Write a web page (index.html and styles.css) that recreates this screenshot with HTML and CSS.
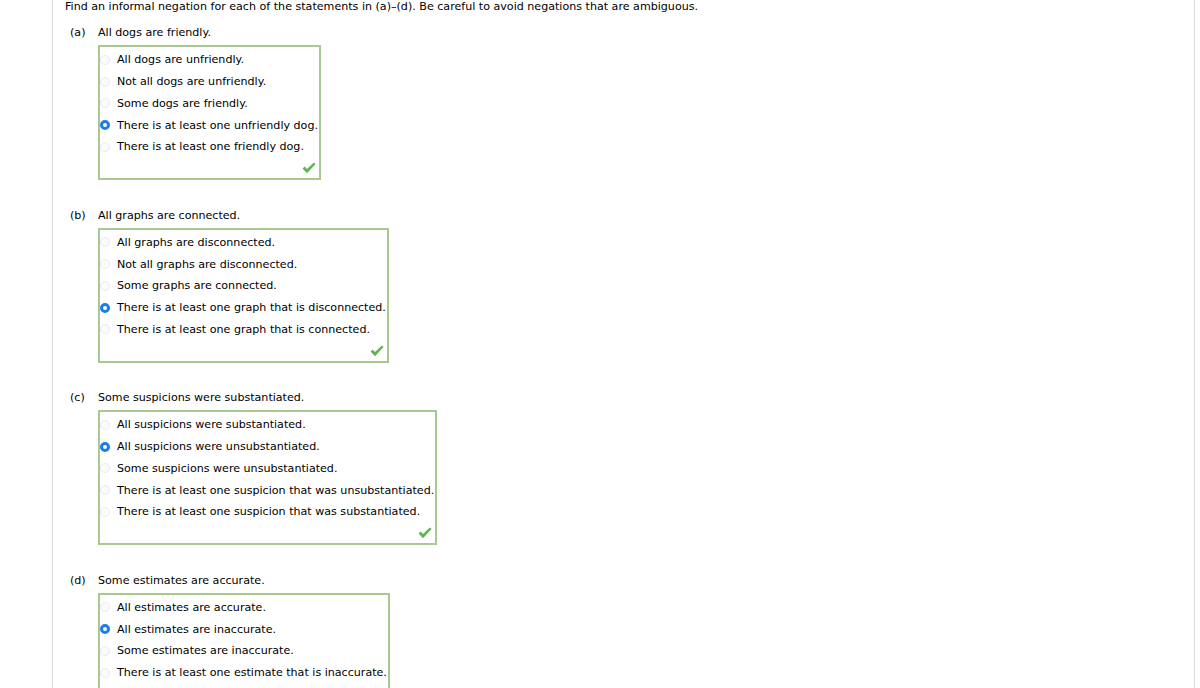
FILE: index.html
```html
<!DOCTYPE html>
<html>
<head>
<meta charset="utf-8">
<link rel="stylesheet" href="styles.css">
</head>
<body>
<div class="page">
  <p class="intro">Find an informal negation for each of the statements in (a)–(d). Be careful to avoid negations that are ambiguous.</p>

  <div class="part">
    <div class="label"><span class="tag">(a)</span>All dogs are friendly.</div>
    <div class="box">
      <div class="opt"><span class="radio"></span>All dogs are unfriendly.</div>
      <div class="opt"><span class="radio"></span>Not all dogs are unfriendly.</div>
      <div class="opt"><span class="radio"></span>Some dogs are friendly.</div>
      <div class="opt"><span class="radio on"></span>There is at least one unfriendly dog.</div>
      <div class="opt"><span class="radio"></span>There is at least one friendly dog.</div>
      <div class="foot"><svg class="check" viewBox="0 0 14 12" width="14" height="12"><path d="M0.6 6.6 L2.6 4.6 L5 7 L11.9 0.4 L13.6 2.1 L5 11.2 Z" fill="#5fb54f"/></svg></div>
    </div>
  </div>

  <div class="part">
    <div class="label"><span class="tag">(b)</span>All graphs are connected.</div>
    <div class="box">
      <div class="opt"><span class="radio"></span>All graphs are disconnected.</div>
      <div class="opt"><span class="radio"></span>Not all graphs are disconnected.</div>
      <div class="opt"><span class="radio"></span>Some graphs are connected.</div>
      <div class="opt"><span class="radio on"></span>There is at least one graph that is disconnected.</div>
      <div class="opt"><span class="radio"></span>There is at least one graph that is connected.</div>
      <div class="foot"><svg class="check" viewBox="0 0 14 12" width="14" height="12"><path d="M0.6 6.6 L2.6 4.6 L5 7 L11.9 0.4 L13.6 2.1 L5 11.2 Z" fill="#5fb54f"/></svg></div>
    </div>
  </div>

  <div class="part">
    <div class="label"><span class="tag">(c)</span>Some suspicions were substantiated.</div>
    <div class="box">
      <div class="opt"><span class="radio"></span>All suspicions were substantiated.</div>
      <div class="opt"><span class="radio on"></span>All suspicions were unsubstantiated.</div>
      <div class="opt"><span class="radio"></span>Some suspicions were unsubstantiated.</div>
      <div class="opt"><span class="radio"></span>There is at least one suspicion that was unsubstantiated.</div>
      <div class="opt"><span class="radio"></span>There is at least one suspicion that was substantiated.</div>
      <div class="foot"><svg class="check" viewBox="0 0 14 12" width="14" height="12"><path d="M0.6 6.6 L2.6 4.6 L5 7 L11.9 0.4 L13.6 2.1 L5 11.2 Z" fill="#5fb54f"/></svg></div>
    </div>
  </div>

  <div class="part">
    <div class="label"><span class="tag">(d)</span>Some estimates are accurate.</div>
    <div class="box">
      <div class="opt"><span class="radio"></span>All estimates are accurate.</div>
      <div class="opt"><span class="radio on"></span>All estimates are inaccurate.</div>
      <div class="opt"><span class="radio"></span>Some estimates are inaccurate.</div>
      <div class="opt"><span class="radio"></span>There is at least one estimate that is inaccurate.</div>
      <div class="opt"><span class="radio"></span>There is at least one estimate that is accurate.</div>
      <div class="foot"><svg class="check" viewBox="0 0 14 12" width="14" height="12"><path d="M0.6 6.6 L2.6 4.6 L5 7 L11.9 0.4 L13.6 2.1 L5 11.2 Z" fill="#5fb54f"/></svg></div>
    </div>
  </div>
</div>
</body>
</html>
```

FILE: styles.css
```css
html, body {
  margin: 0;
  padding: 0;
  background: #fff;
  overflow: hidden;
}
body {
  font-family: "DejaVu Sans", Verdana, sans-serif;
  font-size: 11.1px;
  color: #000;
}
.page {
  margin-left: 52px;
  width: 1129px;
  height: 688px;
  border-left: 1px solid #dcdcdc;
  border-right: 1px solid #dcdcdc;
  padding-left: 12px;
  box-sizing: content-box;
  overflow: hidden;
}
.intro {
  margin: 0;
  line-height: 13px;
}
.part {
  padding-top: 13px;
  padding-left: 5px;
  margin-bottom: 15.5px;
}
.label {
  line-height: 14px;
  display: flex;
}
.tag {
  width: 28px;
}
.box {
  display: flex;
  flex-direction: column;
  width: max-content;
  margin-top: 5px;
  margin-left: 28px;
  border: 2px solid #a9c991;
  padding: 2px 1px 0 0;
}
.opt {
  display: flex;
  align-items: center;
  height: 21.75px;
}
.radio {
  flex: none;
  width: 10px;
  height: 10px;
  border-radius: 50%;
  border: 1px solid #ebebeb;
  background: #fbfbfb;
  margin-right: 7px;
  box-sizing: border-box;
}
.radio.on {
  border: 3px solid #1c7ced;
  background: #fff;
}
.foot {
  height: 20.25px;
  display: flex;
  justify-content: flex-end;
  align-items: flex-end;
  padding: 0 2px 4px 0;
  box-sizing: border-box;
}
.check {
  display: block;
}
```
